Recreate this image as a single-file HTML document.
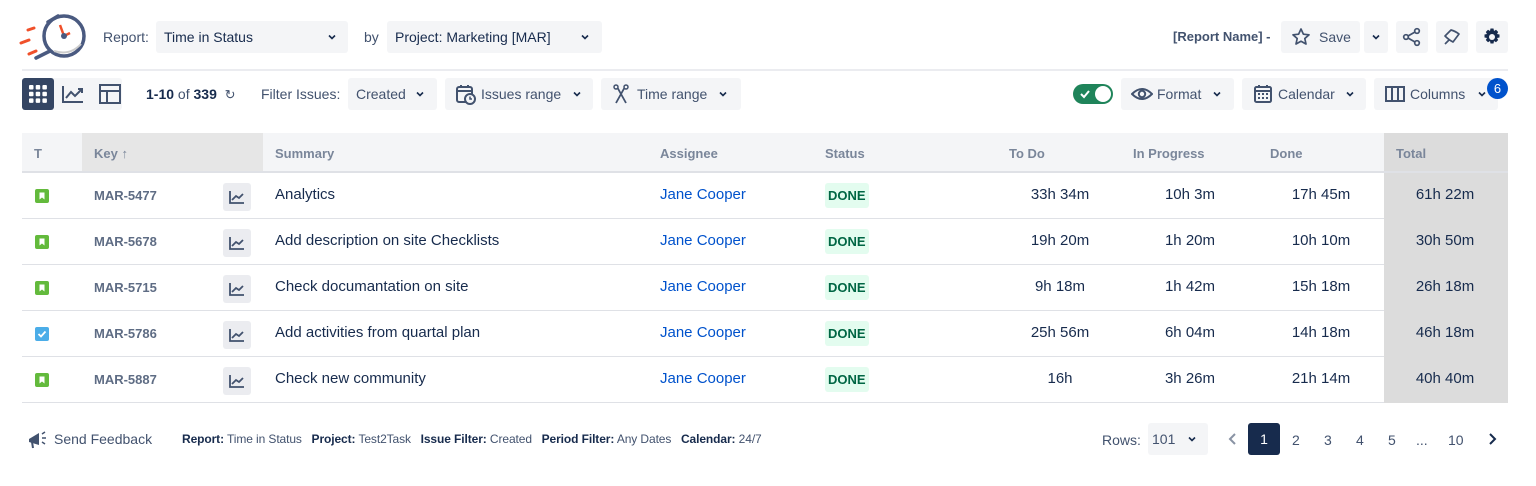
<!DOCTYPE html>
<html><head><meta charset="utf-8"><style>
*{box-sizing:border-box;margin:0;padding:0}
body{width:1536px;height:486px;background:#fff;font-family:"Liberation Sans",sans-serif;color:#42526e;position:relative;overflow:hidden;font-size:14px}
.a{position:absolute}
.btn{position:absolute;background:#f4f5f7;border-radius:3px;height:32px;display:flex;align-items:center;font-size:14px;color:#42526e}
.chev{width:8px;height:8px;position:absolute}
.row{position:absolute;left:22px;width:1486px;height:46px;border-bottom:1px solid #dfe1e6}
.row .tot{position:absolute;right:0;top:0;width:124px;height:46px;background:#dcdcdc}
.c{position:absolute;top:13px;font-size:15px;color:#172b4d}
.key{position:absolute;left:72px;top:15px;font-size:13px;font-weight:bold;color:#5e6c84}
.ci{position:absolute;left:201px;top:10px;width:28px;height:28px;background:#ebecf0;border-radius:3px}
.as{position:absolute;left:638px;top:13px;font-size:15px;color:#0052cc}
.done{position:absolute;left:803px;top:10px;background:#e3fcef;color:#006644;font-weight:bold;font-size:13px;padding:5px 3px;border-radius:3px}
.r{position:absolute;top:13px;font-size:15px;color:#172b4d;text-align:center;width:120px;margin-left:-60px}
.th{position:absolute;top:13px;font-size:13px;font-weight:bold;color:#7a869a}
.pg{position:absolute;top:432px;font-size:14px;color:#42526e}
.f b{color:#172b4d}
</style></head><body>
<svg class="a" style="left:18px;top:8px" width="72" height="60" viewBox="0 0 72 60">
<circle cx="46" cy="28" r="20" fill="none" stroke="#4a5a80" stroke-width="3.5"/>
<path d="M32 43 L18 50 M30 14 L40 8" stroke="#4a5a80" stroke-width="3.5" stroke-linecap="round"/>
<path d="M46 28 L42 17 M46 28 L52 25" stroke="#f0502a" stroke-width="2.5"/>
<circle cx="46" cy="28" r="3" fill="#4a5a80"/>
<path d="M10 22 L16 20 M3 35 L11 32 M11 46 L18 43" stroke="#f0502a" stroke-width="3" stroke-linecap="round"/>
<path d="M36 43 Q52 48 63 36" stroke="#ccc" stroke-width="2" fill="none"/>
</svg>
<div class="a" style="left:103px;top:29px;font-size:14px">Report:</div>
<div class="btn" style="left:156px;top:21px;width:192px;padding-left:8px;color:#172b4d">Time in Status<svg class="chev" style="left:172px;top:12px" viewBox="0 0 8 8"><path d="M1 2.5 L4 5.5 L7 2.5" stroke="#172b4d" stroke-width="1.6" fill="none"/></svg></div>
<div class="a" style="left:364px;top:29px">by</div>
<div class="btn" style="left:387px;top:21px;width:215px;padding-left:8px;color:#172b4d">Project: Marketing [MAR]<svg class="chev" style="left:194px;top:12px" viewBox="0 0 8 8"><path d="M1 2.5 L4 5.5 L7 2.5" stroke="#172b4d" stroke-width="1.6" fill="none"/></svg></div>
<div class="a" style="left:1173px;top:29px;font-weight:bold;font-size:13px;color:#42526e">[Report Name] -</div>
<div class="btn" style="left:1281px;top:21px;width:79px;padding-left:38px">Save<svg class="a" style="left:10px;top:6px" width="20" height="20" viewBox="0 0 20 20"><path d="M10 2 L12.4 7.2 L18 7.8 L13.8 11.5 L15 17 L10 14.2 L5 17 L6.2 11.5 L2 7.8 L7.6 7.2Z" fill="none" stroke="#42526e" stroke-width="1.7" stroke-linejoin="round"/></svg></div>
<div class="btn" style="left:1364px;top:21px;width:24px"><svg class="chev" style="left:8px;top:12px" viewBox="0 0 8 8"><path d="M1 2.5 L4 5.5 L7 2.5" stroke="#172b4d" stroke-width="1.6" fill="none"/></svg></div>
<div class="btn" style="left:1396px;top:21px;width:32px"><svg class="a" style="left:6px;top:6px" width="20" height="20" viewBox="0 0 20 20"><circle cx="15" cy="4" r="2.3" fill="none" stroke="#42526e" stroke-width="1.7"/><circle cx="4" cy="10" r="2.3" fill="none" stroke="#42526e" stroke-width="1.7"/><circle cx="15" cy="16" r="2.3" fill="none" stroke="#42526e" stroke-width="1.7"/><path d="M6 9 L13 5 M6 11 L13 15" stroke="#42526e" stroke-width="1.7"/></svg></div>
<div class="btn" style="left:1436px;top:21px;width:32px"><svg class="a" style="left:6px;top:6px" width="20" height="20" viewBox="0 0 20 20"><path d="M3 9 L9 3 Q13 4 17 7 L11 15 Q7 13 3 9Z M3 17 L7 13" fill="none" stroke="#42526e" stroke-width="1.7" stroke-linejoin="round"/></svg></div>
<div class="btn" style="left:1476px;top:21px;width:32px"><svg class="a" style="left:6px;top:6px" width="20" height="20" viewBox="0 0 20 20"><path d="M8.5 1.5h3l.5 2.5 2-1.2 2.2 2.2-1.2 2 2.5.5v3l-2.5.5 1.2 2-2.2 2.2-2-1.2-.5 2.5h-3l-.5-2.5-2 1.2-2.2-2.2 1.2-2-2.5-.5v-3l2.5-.5-1.2-2 2.2-2.2 2 1.2z" fill="#172b4d"/><circle cx="10" cy="10" r="3" fill="#f4f5f7"/></svg></div>
<div class="a" style="left:22px;top:69px;width:1486px;height:2px;background:#ebecf0"></div>

<div class="a" style="left:22px;top:78px;width:100px;height:32px;background:#f4f5f7;border-radius:3px"></div>
<div class="a" style="left:22px;top:78px;width:32px;height:32px;background:#344563;border-radius:3px"></div>
<svg class="a" style="left:28px;top:84px" width="20" height="20" viewBox="0 0 20 20" fill="#fff"><rect x="1" y="1" width="4.5" height="4.5" rx="1"/><rect x="7.7" y="1" width="4.5" height="4.5" rx="1"/><rect x="14.4" y="1" width="4.5" height="4.5" rx="1"/><rect x="1" y="7.7" width="4.5" height="4.5" rx="1"/><rect x="7.7" y="7.7" width="4.5" height="4.5" rx="1"/><rect x="14.4" y="7.7" width="4.5" height="4.5" rx="1"/><rect x="1" y="14.4" width="4.5" height="4.5" rx="1"/><rect x="7.7" y="14.4" width="4.5" height="4.5" rx="1"/><rect x="14.4" y="14.4" width="4.5" height="4.5" rx="1"/></svg>
<svg class="a" style="left:61px;top:84px" width="24" height="20" viewBox="0 0 24 20"><path d="M2 2 V18 H22 M5 14 L10 8 L14 12 L21 5 M17 5 H21 V9" fill="none" stroke="#42526e" stroke-width="2"/></svg>
<svg class="a" style="left:98px;top:83px" width="24" height="22" viewBox="0 0 24 22"><rect x="2" y="2" width="20" height="18" fill="none" stroke="#42526e" stroke-width="2"/><path d="M2 8 H22 M9 8 V20" stroke="#42526e" stroke-width="2"/></svg>
<div class="a" style="left:146px;top:86px;font-size:14px;color:#42526e"><b style="color:#172b4d">1-10</b> of <b style="color:#172b4d">339</b> &nbsp;<span style="font-size:13px">↻</span></div>
<div class="a" style="left:261px;top:86px">Filter Issues:</div>
<div class="btn" style="left:348px;top:78px;width:89px;padding-left:8px">Created<svg class="chev" style="left:68px;top:12px" viewBox="0 0 8 8"><path d="M1 2.5 L4 5.5 L7 2.5" stroke="#172b4d" stroke-width="1.6" fill="none"/></svg></div>
<div class="btn" style="left:445px;top:78px;width:148px;padding-left:36px"><svg class="a" style="left:10px;top:6px" width="22" height="22" viewBox="0 0 22 22"><rect x="2" y="3" width="15" height="15" rx="2" fill="none" stroke="#42526e" stroke-width="2"/><path d="M2 7 H17 M6 1 V4 M13 1 V4" stroke="#42526e" stroke-width="2"/><circle cx="15" cy="15" r="5" fill="#f4f5f7" stroke="#42526e" stroke-width="2"/><path d="M15 12.5 V15 H17" stroke="#42526e" stroke-width="1.5" fill="none"/></svg>Issues range<svg class="chev" style="left:128px;top:12px" viewBox="0 0 8 8"><path d="M1 2.5 L4 5.5 L7 2.5" stroke="#172b4d" stroke-width="1.6" fill="none"/></svg></div>
<div class="btn" style="left:601px;top:78px;width:140px;padding-left:36px"><svg class="a" style="left:10px;top:6px" width="20" height="20" viewBox="0 0 20 20"><path d="M5 1 L15 19 M15 1 L5 19" stroke="#42526e" stroke-width="1.8"/><circle cx="5" cy="3" r="2" fill="#f4f5f7" stroke="#42526e" stroke-width="1.5"/><circle cx="15" cy="3" r="2" fill="#f4f5f7" stroke="#42526e" stroke-width="1.5"/></svg>Time range<svg class="chev" style="left:118px;top:12px" viewBox="0 0 8 8"><path d="M1 2.5 L4 5.5 L7 2.5" stroke="#172b4d" stroke-width="1.6" fill="none"/></svg></div>
<div class="a" style="left:1073px;top:84px;width:40px;height:20px;background:#1f845a;border-radius:10px"></div>
<div class="a" style="left:1095px;top:86px;width:16px;height:16px;background:#fff;border-radius:8px"></div>
<svg class="a" style="left:1080px;top:89px" width="10" height="10" viewBox="0 0 10 10"><path d="M1 5 L4 8 L9 2" stroke="#fff" stroke-width="2" fill="none"/></svg>
<div class="btn" style="left:1121px;top:78px;width:113px;padding-left:36px"><svg class="a" style="left:10px;top:6px" width="22" height="20" viewBox="0 0 22 20"><path d="M1 10 Q11 0 21 10 Q11 20 1 10Z" fill="none" stroke="#42526e" stroke-width="2"/><circle cx="11" cy="10" r="3.2" fill="none" stroke="#42526e" stroke-width="2"/></svg>Format<svg class="chev" style="left:92px;top:12px" viewBox="0 0 8 8"><path d="M1 2.5 L4 5.5 L7 2.5" stroke="#172b4d" stroke-width="1.6" fill="none"/></svg></div>
<div class="btn" style="left:1242px;top:78px;width:124px;padding-left:36px"><svg class="a" style="left:11px;top:6px" width="20" height="20" viewBox="0 0 20 20"><rect x="2" y="3" width="16" height="15" rx="1.5" fill="none" stroke="#42526e" stroke-width="2"/><path d="M2 7 H18 M6 1 V4 M14 1 V4" stroke="#42526e" stroke-width="2"/><path d="M5 10h2M9 10h2M13 10h2M5 14h2M9 14h2M13 14h2" stroke="#42526e" stroke-width="2"/></svg>Calendar<svg class="chev" style="left:104px;top:12px" viewBox="0 0 8 8"><path d="M1 2.5 L4 5.5 L7 2.5" stroke="#172b4d" stroke-width="1.6" fill="none"/></svg></div>
<div class="btn" style="left:1374px;top:78px;width:124px;padding-left:36px"><svg class="a" style="left:10px;top:6px" width="22" height="20" viewBox="0 0 22 20"><rect x="2" y="3" width="18" height="14" fill="none" stroke="#42526e" stroke-width="2"/><path d="M8 3 V17 M14 3 V17" stroke="#42526e" stroke-width="2"/></svg>Columns<svg class="chev" style="left:104px;top:12px" viewBox="0 0 8 8"><path d="M1 2.5 L4 5.5 L7 2.5" stroke="#172b4d" stroke-width="1.6" fill="none"/></svg></div>
<div class="a" style="left:1487px;top:78px;width:21px;height:21px;border-radius:50%;background:#0052cc;color:#fff;font-size:13px;text-align:center;line-height:21px">6</div>

<div class="a" style="left:22px;top:133px;width:1486px;height:40px;background:#f4f5f7;border-bottom:2px solid #dfe1e6"></div>
<div class="a" style="left:82px;top:133px;width:181px;height:40px;background:#e6e6e6;border-bottom:2px solid #dfe1e6"></div>
<div class="a" style="left:1384px;top:133px;width:124px;height:40px;background:#dcdcdc;border-bottom:2px solid #dfe1e6"></div>
<div class="th" style="left:34px;top:146px">T</div>
<div class="th" style="left:94px;top:146px">Key ↑</div>
<div class="th" style="left:275px;top:146px">Summary</div>
<div class="th" style="left:660px;top:146px">Assignee</div>
<div class="th" style="left:825px;top:146px">Status</div>
<div class="th" style="left:1009px;top:146px">To Do</div>
<div class="th" style="left:1133px;top:146px">In Progress</div>
<div class="th" style="left:1270px;top:146px">Done</div>
<div class="th" style="left:1396px;top:146px">Total</div>

<div class="row" style="top:173px"><div class="tot"></div>
<svg class="a" style="left:13px;top:16px" width="14" height="14"><rect width="14" height="14" rx="2" fill="#63ba3c"/><path d="M4.5 3.5 H9.5 V10.5 L7 8.5 L4.5 10.5Z" fill="#fff"/></svg>
<div class="key">MAR-5477</div><div class="ci"><svg width="28" height="28"><path d="M7 8 V20 H21 M9 17 L13 13 L16 15 L20 11" fill="none" stroke="#42526e" stroke-width="1.8"/></svg></div>
<div class="c" style="left:253px">Analytics</div><div class="as">Jane Cooper</div><div class="done">DONE</div>
<div class="r" style="left:1038px">33h 34m</div><div class="r" style="left:1168px">10h 3m</div><div class="r" style="left:1299px">17h 45m</div><div class="r" style="left:1423px">61h 22m</div></div>

<div class="row" style="top:219px"><div class="tot"></div>
<svg class="a" style="left:13px;top:16px" width="14" height="14"><rect width="14" height="14" rx="2" fill="#63ba3c"/><path d="M4.5 3.5 H9.5 V10.5 L7 8.5 L4.5 10.5Z" fill="#fff"/></svg>
<div class="key">MAR-5678</div><div class="ci"><svg width="28" height="28"><path d="M7 8 V20 H21 M9 17 L13 13 L16 15 L20 11" fill="none" stroke="#42526e" stroke-width="1.8"/></svg></div>
<div class="c" style="left:253px">Add description on site Checklists</div><div class="as">Jane Cooper</div><div class="done">DONE</div>
<div class="r" style="left:1038px">19h 20m</div><div class="r" style="left:1168px">1h 20m</div><div class="r" style="left:1299px">10h 10m</div><div class="r" style="left:1423px">30h 50m</div></div>

<div class="row" style="top:265px"><div class="tot"></div>
<svg class="a" style="left:13px;top:16px" width="14" height="14"><rect width="14" height="14" rx="2" fill="#63ba3c"/><path d="M4.5 3.5 H9.5 V10.5 L7 8.5 L4.5 10.5Z" fill="#fff"/></svg>
<div class="key">MAR-5715</div><div class="ci"><svg width="28" height="28"><path d="M7 8 V20 H21 M9 17 L13 13 L16 15 L20 11" fill="none" stroke="#42526e" stroke-width="1.8"/></svg></div>
<div class="c" style="left:253px">Check documantation on site</div><div class="as">Jane Cooper</div><div class="done">DONE</div>
<div class="r" style="left:1038px">9h 18m</div><div class="r" style="left:1168px">1h 42m</div><div class="r" style="left:1299px">15h 18m</div><div class="r" style="left:1423px">26h 18m</div></div>

<div class="row" style="top:311px"><div class="tot"></div>
<svg class="a" style="left:13px;top:16px" width="14" height="14"><rect width="14" height="14" rx="2" fill="#4bade8"/><path d="M3.5 7 L6 9.5 L10.5 4.5" stroke="#fff" stroke-width="1.8" fill="none"/></svg>
<div class="key">MAR-5786</div><div class="ci"><svg width="28" height="28"><path d="M7 8 V20 H21 M9 17 L13 13 L16 15 L20 11" fill="none" stroke="#42526e" stroke-width="1.8"/></svg></div>
<div class="c" style="left:253px">Add activities from quartal plan</div><div class="as">Jane Cooper</div><div class="done">DONE</div>
<div class="r" style="left:1038px">25h 56m</div><div class="r" style="left:1168px">6h 04m</div><div class="r" style="left:1299px">14h 18m</div><div class="r" style="left:1423px">46h 18m</div></div>

<div class="row" style="top:357px"><div class="tot"></div>
<svg class="a" style="left:13px;top:16px" width="14" height="14"><rect width="14" height="14" rx="2" fill="#63ba3c"/><path d="M4.5 3.5 H9.5 V10.5 L7 8.5 L4.5 10.5Z" fill="#fff"/></svg>
<div class="key">MAR-5887</div><div class="ci"><svg width="28" height="28"><path d="M7 8 V20 H21 M9 17 L13 13 L16 15 L20 11" fill="none" stroke="#42526e" stroke-width="1.8"/></svg></div>
<div class="c" style="left:253px">Check new community</div><div class="as">Jane Cooper</div><div class="done">DONE</div>
<div class="r" style="left:1038px">16h</div><div class="r" style="left:1168px">3h 26m</div><div class="r" style="left:1299px">21h 14m</div><div class="r" style="left:1423px">40h 40m</div></div>

<svg class="a" style="left:27px;top:430px" width="22" height="20" viewBox="0 0 22 20"><path d="M2 9 L12 3 V15 L2 12Z" fill="#42526e"/><path d="M5 12 L6 18" stroke="#42526e" stroke-width="2"/><path d="M15 4 L18 2 M15 8 H19 M15 12 L18 14" stroke="#42526e" stroke-width="1.5"/></svg>
<div class="a" style="left:54px;top:431px;font-size:14px;color:#42526e">Send Feedback</div>
<div class="a f" style="left:182px;top:432px;font-size:12px;color:#42526e;letter-spacing:-0.1px"><b>Report:</b> Time in Status &nbsp;&nbsp;<b>Project:</b> Test2Task &nbsp;&nbsp;<b>Issue Filter:</b> Created &nbsp;&nbsp;<b>Period Filter:</b> Any Dates &nbsp;&nbsp;<b>Calendar:</b> 24/7</div>
<div class="pg" style="left:1102px">Rows:</div>
<div class="btn" style="left:1148px;top:423px;width:60px;padding-left:4px">101<svg class="chev" style="left:40px;top:12px" viewBox="0 0 8 8"><path d="M1 2.5 L4 5.5 L7 2.5" stroke="#172b4d" stroke-width="1.6" fill="none"/></svg></div>
<svg class="a" style="left:1228px;top:432px" width="10" height="14"><path d="M7 2 L2 7 L7 12" stroke="#8993a4" stroke-width="2" fill="none"/></svg>
<div class="a" style="left:1248px;top:423px;width:32px;height:32px;background:#172b4d;border-radius:3px;color:#fff;text-align:center;line-height:32px;font-size:14px">1</div>
<div class="pg" style="left:1292px">2</div><div class="pg" style="left:1324px">3</div><div class="pg" style="left:1356px">4</div><div class="pg" style="left:1388px">5</div><div class="pg" style="left:1416px">...</div><div class="pg" style="left:1448px">10</div>
<svg class="a" style="left:1487px;top:432px" width="10" height="14"><path d="M3 2 L8 7 L3 12" stroke="#172b4d" stroke-width="2" fill="none"/></svg>
</body></html>
